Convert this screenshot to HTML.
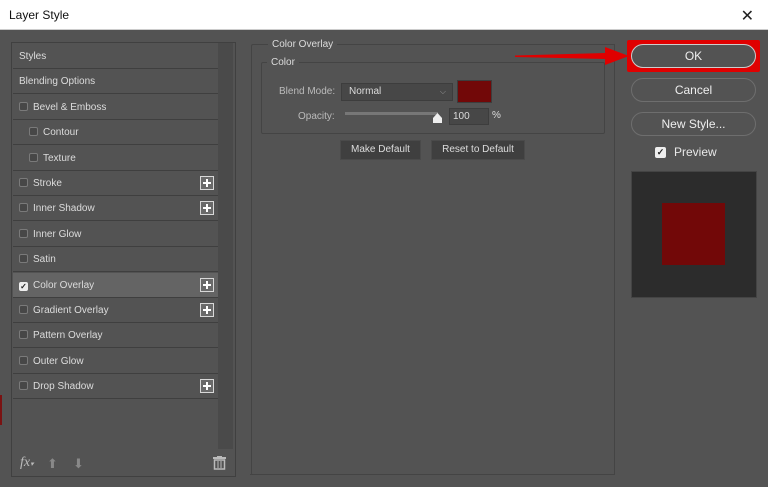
<!DOCTYPE html>
<html><head><style>
*{margin:0;padding:0;box-sizing:border-box}
body{width:768px;height:487px;background:#535353;font-family:"Liberation Sans",sans-serif;font-size:10px;color:#dcdcdc;position:relative;overflow:hidden}
.abs{position:absolute}
#title{left:0;top:0;width:768px;height:30px;background:#fff;color:#111;font-size:12px;line-height:30px;padding-left:9px;border-bottom:1px solid #ccc}
#close{right:14px;top:6px;font-size:16px;color:#222}
#lp{left:11px;top:42px;width:225px;height:435px;border:1px solid #404040}
#scroll{left:218px;top:43px;width:15px;height:406px;background:#4a4a4a}
.row{position:absolute;left:13px;width:205px;height:25px;border-bottom:1px solid #3f3f3f;line-height:25px;padding-left:6px}
.cb{display:inline-block;width:9px;height:9px;border:1px solid #7a7a7a;border-radius:2px;background:#474747;vertical-align:-1px;margin-right:5px}
.plus{position:absolute;right:4px;top:5px;width:14px;height:14px;border:1px solid #d8d8d8;background:#6a6a6a}
.plus:before{content:"";position:absolute;left:2px;top:5px;width:8px;height:2px;background:#fff}
.plus:after{content:"";position:absolute;left:5px;top:2px;width:2px;height:8px;background:#fff}
.btn{position:absolute;border:1px solid #6e6e6e;border-radius:12px;text-align:center;color:#eee;font-size:12px}
fieldset{position:absolute;border:1px solid #444;border-radius:2px}
legend{padding:0 4px;margin-left:14px;color:#dcdcdc;font-size:10px}
.sb{position:absolute;height:20px;background:#3f3f3f;border:1px solid #4a4a4a;line-height:18px;text-align:center;color:#ddd}
</style></head><body>
<div id="title" class="abs">Layer Style</div>
<div id="close" class="abs">✕</div>
<div id="lp" class="abs"></div>
<div id="scroll" class="abs"></div>
<div class="row" style="top:44px">Styles</div>
<div class="row" style="top:69.4px">Blending Options</div>
<div class="row" style="top:94.8px"><span class="cb"></span>Bevel &amp; Emboss</div>
<div class="row" style="top:120.2px;padding-left:16px"><span class="cb"></span>Contour</div>
<div class="row" style="top:145.6px;padding-left:16px"><span class="cb"></span>Texture</div>
<div class="row" style="top:171px"><span class="cb"></span>Stroke<span class="plus"></span></div>
<div class="row" style="top:196.4px"><span class="cb"></span>Inner Shadow<span class="plus"></span></div>
<div class="row" style="top:221.8px"><span class="cb"></span>Inner Glow</div>
<div class="row" style="top:247.2px"><span class="cb"></span>Satin</div>
<div class="row" style="top:272.6px;background:#646464"><span class="cb" style="background:#eee;border-color:#eee;color:#222;font-size:8px;line-height:7px;text-align:center;font-weight:bold">✓</span>Color Overlay<span class="plus"></span></div>
<div class="row" style="top:298px"><span class="cb"></span>Gradient Overlay<span class="plus"></span></div>
<div class="row" style="top:323.4px"><span class="cb"></span>Pattern Overlay</div>
<div class="row" style="top:348.8px"><span class="cb"></span>Outer Glow</div>
<div class="row" style="top:374.2px"><span class="cb"></span>Drop Shadow<span class="plus"></span></div>
<div class="abs" style="left:20px;top:455px;font-style:italic;font-size:14px;color:#bbb;font-family:'Liberation Serif',serif">fx<span style="font-size:7px">▾</span></div>
<div class="abs" style="left:47px;top:456px;font-size:13px;color:#888">⬆</div>
<div class="abs" style="left:73px;top:456px;font-size:13px;color:#888">⬇</div>
<svg class="abs" style="left:213px;top:456px" width="13" height="14"><rect x="0" y="1" width="13" height="2" fill="#bbb"/><rect x="4" y="0" width="5" height="2" fill="#bbb"/><rect x="1.5" y="4" width="10" height="9" fill="none" stroke="#bbb" stroke-width="1.5"/><path d="M5 5v7M8 5v7" stroke="#bbb"/></svg>
<div class="abs" style="left:250px;top:44px;width:365px;height:431px;border-right:1px solid #444;border-bottom:1px solid #444"></div>
<fieldset style="left:251px;top:39px;width:364px;height:436px;border-right:none;border-bottom:none"><legend style="margin-left:16px">Color Overlay</legend></fieldset>
<fieldset style="left:261px;top:57px;width:344px;height:77px"><legend style="margin-left:5px">Color</legend></fieldset>
<div class="abs" style="left:279px;top:86px;color:#bbb">Blend Mode:</div>
<div class="abs" style="left:341px;top:83px;width:112px;height:18px;background:#474747;border:1px solid #3d3d3d;padding-left:7px;line-height:16px">Normal<span style="position:absolute;right:6px;top:0;font-size:8px;color:#999">⌵</span></div>
<div class="abs" style="left:457px;top:80px;width:35px;height:23px;background:#720808;border:1px solid #3d3d3d"></div>
<div class="abs" style="left:298px;top:111px;color:#bbb">Opacity:</div>
<div class="abs" style="left:345px;top:112px;width:93px;height:3px;background:#777"></div>
<svg class="abs" style="left:432px;top:113px" width="11" height="10"><path d="M5.5 0L10 5V10H1V5Z" fill="#eee"/></svg>
<div class="abs" style="left:449px;top:108px;width:40px;height:17px;background:#474747;border:1px solid #3d3d3d;padding-left:3px;line-height:15px">100</div>
<div class="abs" style="left:492px;top:110px">%</div>
<div class="sb" style="left:340px;top:140px;width:81px">Make Default</div>
<div class="sb" style="left:431px;top:140px;width:94px">Reset to Default</div>
<div class="abs" style="left:627px;top:40px;width:133px;height:32px;background:#e00000;border-radius:2px"></div>
<div class="btn" style="left:631px;top:44px;width:125px;height:24px;line-height:22px;background:#535353;border-color:#ccc">OK</div>
<div class="btn" style="left:631px;top:78px;width:125px;height:24px;line-height:22px">Cancel</div>
<div class="btn" style="left:631px;top:112px;width:125px;height:24px;line-height:22px">New Style...</div>
<div class="abs" style="left:655px;top:147px;width:11px;height:11px;background:#eee;border-radius:2px;color:#222;font-size:9px;line-height:11px;text-align:center;font-weight:bold">✓</div>
<div class="abs" style="left:674px;top:145px;font-size:12px;color:#e8e8e8">Preview</div>
<div class="abs" style="left:631px;top:171px;width:126px;height:127px;background:#2c2c2c;border:1px solid #444"></div>
<div class="abs" style="left:662px;top:203px;width:63px;height:62px;background:#720808"></div>
<svg class="abs" style="left:515px;top:45px" width="115" height="22"><path d="M0 10.5L90 8V2L114 11L90 20V14L0 12Z" fill="#e00000"/></svg>
<div class="abs" style="left:0;top:395px;width:2px;height:30px;background:#7a1212"></div>
</body></html>
